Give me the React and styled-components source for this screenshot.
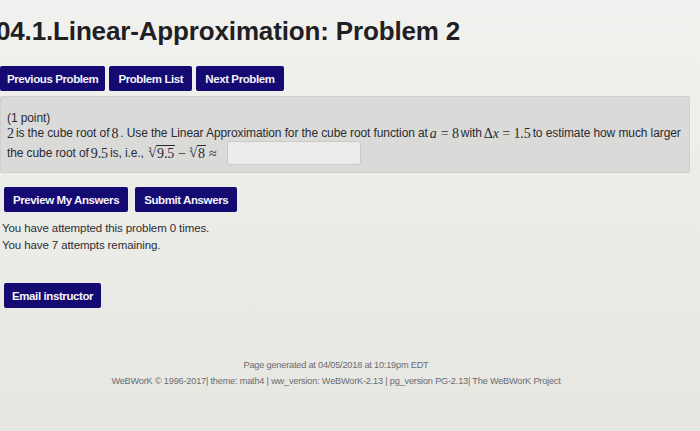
import React from 'react';
import styled, { createGlobalStyle } from 'styled-components';

const GlobalStyle = createGlobalStyle`
  html, body {
    margin: 0;
    padding: 0;
  }
  body {
    background: linear-gradient(180deg, #f1f1ef 0%, #ebebe7 55%, #e7e7e2 100%);
    font-family: "Liberation Sans", Arial, sans-serif;
    color: #2e2e33;
  }
`;

const Page = styled.div`
  width: 700px;
  height: 431px;
  overflow: hidden;
  display: flex;
  flex-direction: column;
`;

const Title = styled.h1`
  margin: 16px 0 0 -4px;
  font-size: 26px;
  font-weight: bold;
  letter-spacing: -0.15px;
  color: #1f1f24;
  line-height: 30px;
`;

const ButtonRow = styled.div`
  display: flex;
  gap: ${p => p.gap || 5}px;
  margin: ${p => p.margin || '0'};
  padding-left: ${p => p.indent || 0}px;
  align-items: flex-end;
`;

const Button = styled.button`
  background: #140a72;
  color: #f4f4fa;
  border: none;
  border-radius: 2px;
  height: 25px;
  padding: 0 ${p => p.pad || 9}px;
  font-family: "Liberation Sans", Arial, sans-serif;
  font-size: 11.5px;
  font-weight: bold;
  letter-spacing: -0.4px;
  cursor: pointer;
`;

const ProblemBox = styled.div`
  margin: 5px 10px 0 0;
  background: #dadbd8;
  border: 1px solid #cfd0cd;
  border-radius: 2px;
  padding: 14px 6px 7px 6px;
  font-size: 12px;
  line-height: 15px;
  letter-spacing: -0.1px;
  color: #2a2a32;
`;

const Line = styled.div`
  display: flex;
  align-items: center;
  white-space: nowrap;
`;

const M = styled.span`
  font-family: "Liberation Serif", "Times New Roman", serif;
  font-size: 14px;
  font-style: ${p => (p.i ? 'italic' : 'normal')};
  margin: 0 2px;
`;

const Root = styled.span`
  font-family: "Liberation Serif", "Times New Roman", serif;
  font-size: 14px;
  margin: 0 1px;
  display: inline-flex;
  align-items: flex-start;
  sup {
    font-size: 7px;
    line-height: 8px;
    margin-right: -3px;
  }
`;

const Over = styled.span`
  border-top: 1px solid #2a2a32;
  padding: 0 1px;
`;

const AnswerInput = styled.input`
  width: 134px;
  height: 24px;
  margin-left: 8px;
  box-sizing: border-box;
  border: 1px solid #c9cac7;
  border-radius: 3px;
  background: #ecedea;
`;

const Attempts = styled.div`
  margin: 8px 0 0 2px;
  font-size: 11.5px;
  line-height: 17px;
  letter-spacing: -0.1px;
  color: #2e2e33;
`;

const Footer = styled.div`
  margin-top: 49px;
  padding-right: 28px;
  text-align: center;
  font-size: 9.2px;
  line-height: 16px;
  color: #6b6b70;
  letter-spacing: -0.2px;
`;

export default function App() {
  return (
    <Page>
      <GlobalStyle />
      <Title>04.1.Linear-Approximation: Problem 2</Title>
      <ButtonRow gap={4} margin="20px 0 0 0">
        <Button pad={7}>Previous Problem</Button>
        <Button>Problem List</Button>
        <Button>Next Problem</Button>
      </ButtonRow>
      <ProblemBox>
        <div>(1 point)</div>
        <Line>
          <M style={{ marginLeft: 0 }}>2</M>is the cube root of<M>8</M>. Use the Linear Approximation for the cube root function at
          <M i>a</M><M>= 8</M>with<M>Δ<i>x</i> = 1.5</M>to estimate how much larger
        </Line>
        <Line>
          the cube root of<M>9.5</M>is, i.e.,&nbsp;
          <Root><sup>3</sup>√<Over>9.5</Over></Root>
          <M>−</M>
          <Root><sup>3</sup>√<Over>8</Over></Root>
          <M>≈</M>
          <AnswerInput />
        </Line>
      </ProblemBox>
      <ButtonRow gap={7} margin="14px 0 0 0" indent={4}>
        <Button pad={9}>Preview My Answers</Button>
        <Button pad={9}>Submit Answers</Button>
      </ButtonRow>
      <Attempts>
        You have attempted this problem 0 times.
        <br />
        You have 7 attempts remaining.
      </Attempts>
      <ButtonRow margin="29px 0 0 0" indent={4}>
        <Button pad={8}>Email instructor</Button>
      </ButtonRow>
      <Footer>
        <div>Page generated at 04/05/2018 at 10:19pm EDT</div>
        <div>WeBWorK © 1996-2017| theme: math4 | ww_version: WeBWorK-2.13 | pg_version PG-2.13| The WeBWorK Project</div>
      </Footer>
    </Page>
  );
}
